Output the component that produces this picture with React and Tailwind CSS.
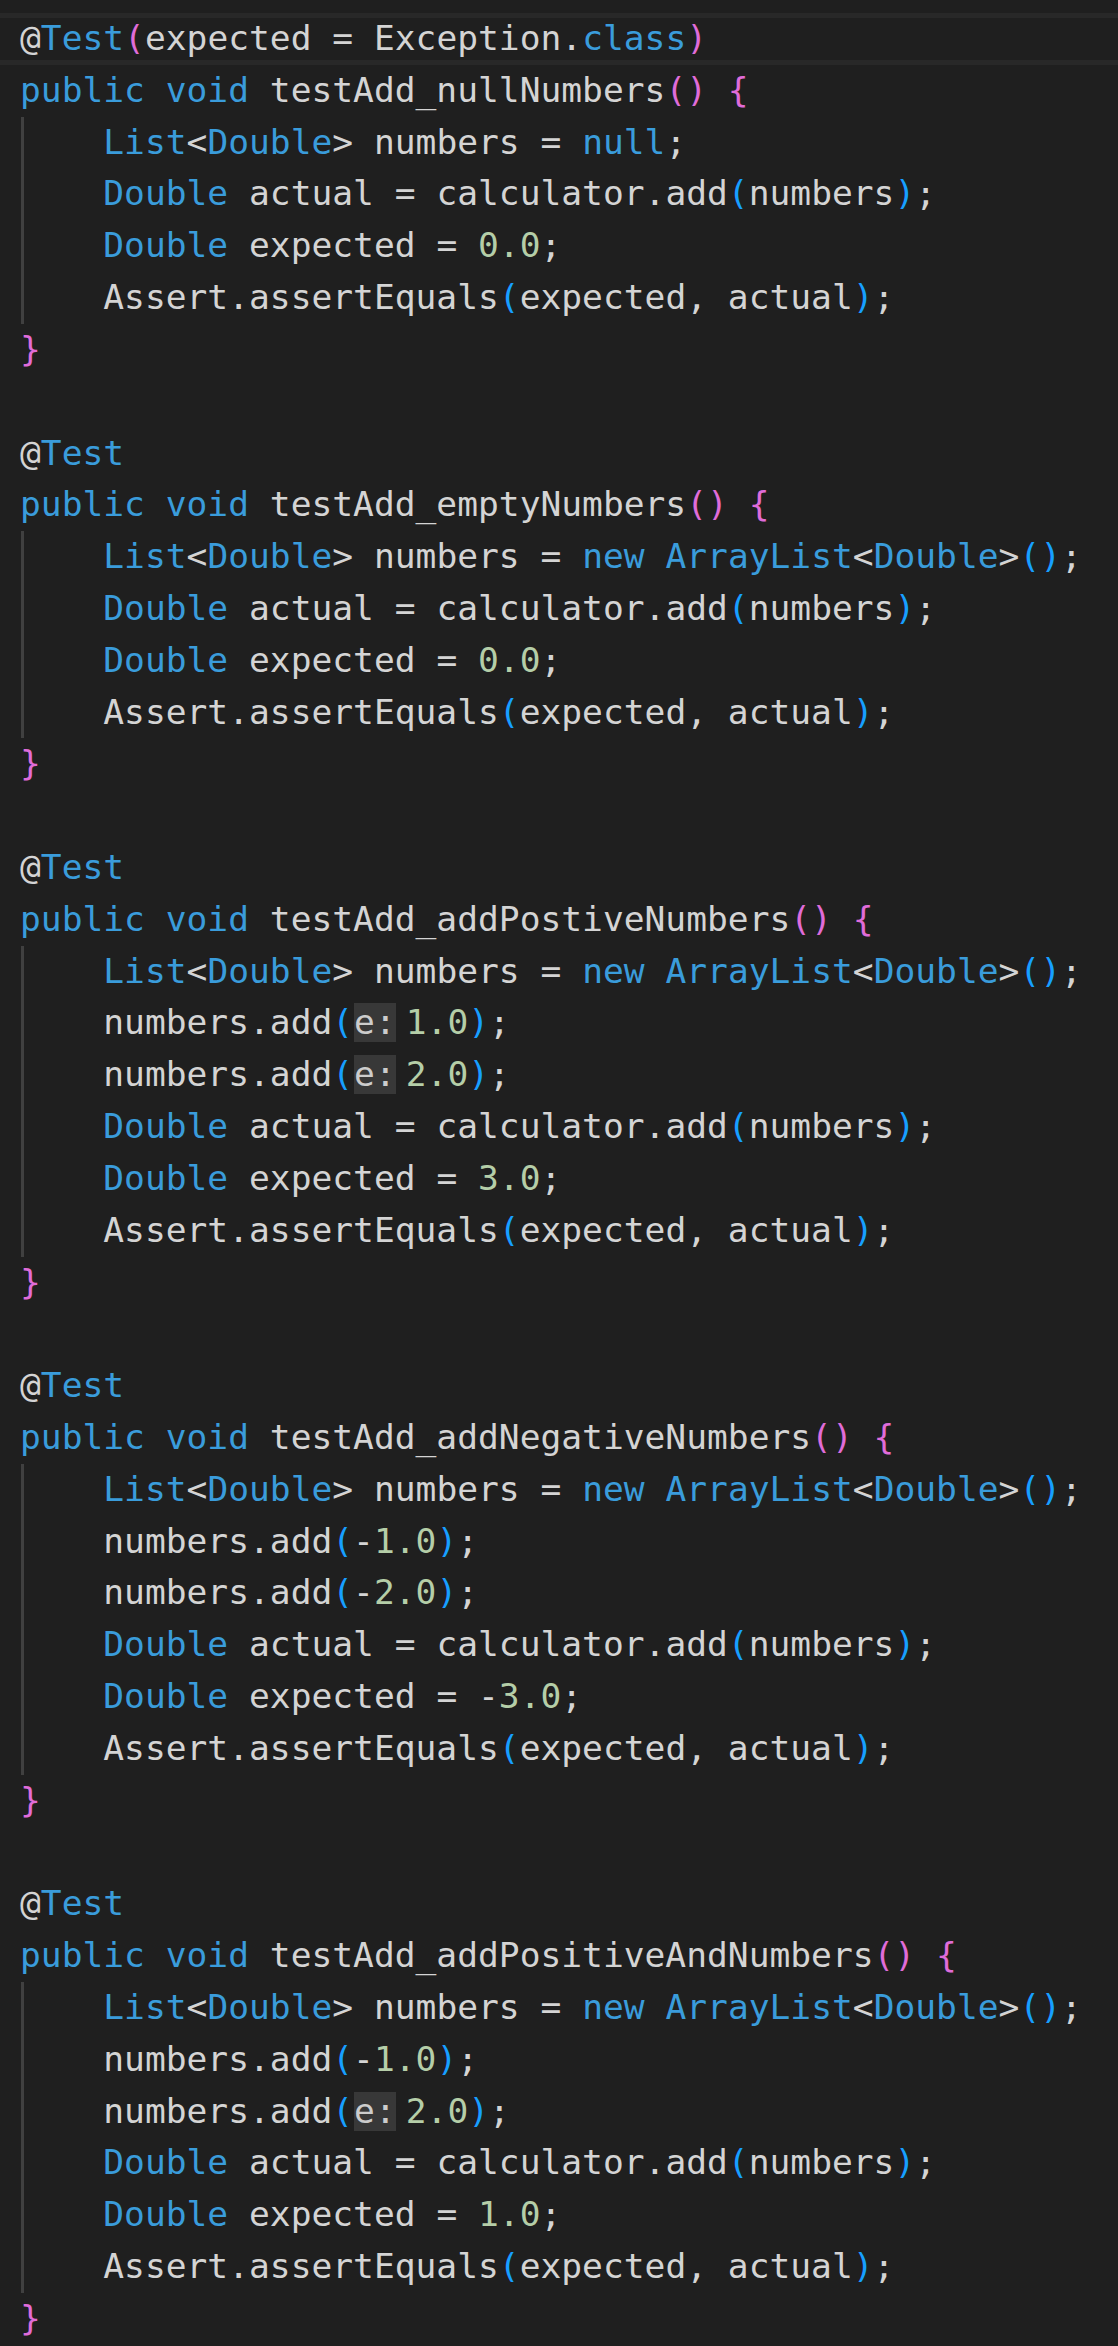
import React from "react";

const k = (t) => <span className="text-[#3a9cdb]">{t}</span>;
const p = (t) => <span className="text-[#e06cd9]">{t}</span>;
const b = (t) => <span className="text-[#179fff]">{t}</span>;
const n = (t) => <span className="text-[#b5cea8]">{t}</span>;
const hint = (t) => (
  <span className="inline-block h-[39px] leading-[39px] ml-[1px] mr-[10px] bg-[#383838] text-[#cccccc]">
    {t}
  </span>
);

function Line({ children, className = "" }) {
  return <div className={`h-[51.82px] whitespace-pre pl-[20px] ${className}`}>{children || " "}</div>;
}

const listNull = [k("List"), "<", k("Double"), "> numbers = ", k("null"), ";"];
const listNew = [
  k("List"), "<", k("Double"), "> numbers = ", k("new"), " ", k("ArrayList"), "<", k("Double"), ">", b("()"), ";",
];
const actual = [k("Double"), " actual = calculator.add", b("("), "numbers", b(")"), ";"];
const expected = (v, neg) => [k("Double"), " expected = ", neg ? "-" : "", n(v), ";"];
const assertLine = ["Assert.assertEquals", b("("), "expected, actual", b(")"), ";"];
const addHint = (v) => ["numbers.add", b("("), hint("e:"), n(v), b(")"), ";"];
const addNeg = (v) => ["numbers.add", b("("), "-", n(v), b(")"), ";"];

const methods = [
  { name: "testAdd_nullNumbers", body: [listNull, actual, expected("0.0"), assertLine] },
  { name: "testAdd_emptyNumbers", body: [listNew, actual, expected("0.0"), assertLine] },
  {
    name: "testAdd_addPostiveNumbers",
    body: [listNew, addHint("1.0"), addHint("2.0"), actual, expected("3.0"), assertLine],
  },
  {
    name: "testAdd_addNegativeNumbers",
    body: [listNew, addNeg("1.0"), addNeg("2.0"), actual, expected("3.0", true), assertLine],
  },
  {
    name: "testAdd_addPositiveAndNumbers",
    body: [listNew, addNeg("1.0"), addHint("2.0"), actual, expected("1.0"), assertLine],
  },
];

export default function App() {
  return (
    <div className="min-h-screen w-full bg-[#1f1f1f] pt-[13px] text-[34.6px] leading-[51.82px] text-[#d4d4d4] [font-family:'DejaVu_Sans_Mono',monospace]">
      {methods.map((m, i) => (
        <div key={m.name}>
          {i > 0 && <Line />}
          {i === 0 ? (
            <Line className="border-y-[5px] border-[#282828] leading-[41.82px]">
              @{k("Test")}
              {p("(")}expected = Exception.{k("class")}
              {p(")")}
            </Line>
          ) : (
            <Line>@{k("Test")}</Line>
          )}
          <Line>
            {k("public void")} {m.name}
            {p("()")} {p("{")}
          </Line>
          <div className="ml-[21px] border-l-[3px] border-[#404040]">
            {m.body.map((l, j) => (
              <Line key={j} className="-ml-[24px]">
                {"    "}
                {l.map((t, x) => (
                  <React.Fragment key={x}>{t}</React.Fragment>
                ))}
              </Line>
            ))}
          </div>
          <Line>{p("}")}</Line>
        </div>
      ))}
    </div>
  );
}
